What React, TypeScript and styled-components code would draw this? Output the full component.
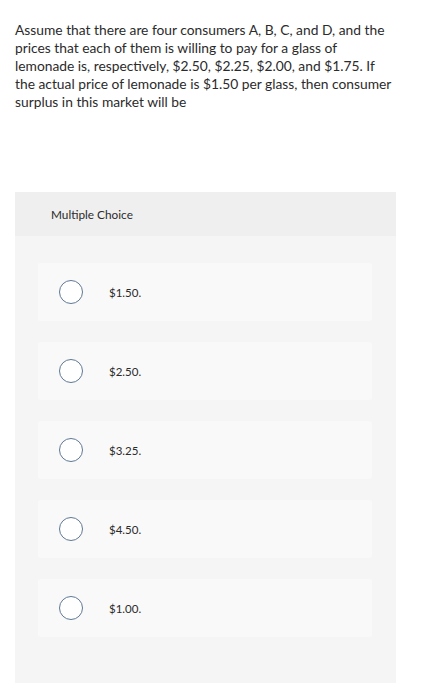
import styled, { createGlobalStyle } from 'styled-components';

const GlobalStyle = createGlobalStyle`
    body {
        margin: 0;
        background: #ffffff;
        font-family: 'Lato', 'Open Sans', sans-serif;
        color: #2b2b2b;
    }
`;

const options = ['$1.50.', '$2.50.', '$3.25.', '$4.50.', '$1.00.'];

const App = () => {
    return (
        <Page>
            <GlobalStyle />
            <Question>
                Assume that there are four consumers A, B, C, and D, and the prices that each of them is willing to pay
                for a glass of lemonade is, respectively, $2.50, $2.25, $2.00, and $1.75. If the actual price of
                lemonade is $1.50 per glass, then consumer surplus in this market will be
            </Question>

            <Card>
                <CardHeader>Multiple Choice</CardHeader>
                <OptionList>
                    {options.map((label) => (
                        <Option key={label}>
                            <Radio />
                            <OptionText>{label}</OptionText>
                        </Option>
                    ))}
                </OptionList>
            </Card>
        </Page>
    );
};

export default App;

const Page = styled.div`
    display: flex;
    flex-direction: column;
    padding: 21px 15px 18px 15px;
    width: 433px;
    box-sizing: border-box;
`;

const Question = styled.div`
    width: 382px;
    font-size: 13.8px;
    line-height: 18px;
    color: #2b2b2b;
`;

const Card = styled.div`
    margin-top: 81px;
    width: 381px;
    background: #f5f5f5;
    display: flex;
    flex-direction: column;
`;

const CardHeader = styled.div`
    height: 44px;
    background: #efefef;
    display: flex;
    align-items: center;
    padding-left: 36px;
    font-size: 11.8px;
    color: #2b2b2b;
`;

const OptionList = styled.div`
    display: flex;
    flex-direction: column;
    gap: 21px;
    padding: 27px 24px 46px 23px;
`;

const Option = styled.div`
    height: 58px;
    background: #f9f9f9;
    border-radius: 3px;
    display: flex;
    align-items: center;
    padding-left: 21px;
`;

const Radio = styled.span`
    width: 22px;
    height: 22px;
    border-radius: 50%;
    border: 1.3px solid #5f7894;
    background: #ffffff;
    flex-shrink: 0;
`;

const OptionText = styled.span`
    margin-left: 26px;
    font-size: 11.5px;
    color: #2b2b2b;
`;
